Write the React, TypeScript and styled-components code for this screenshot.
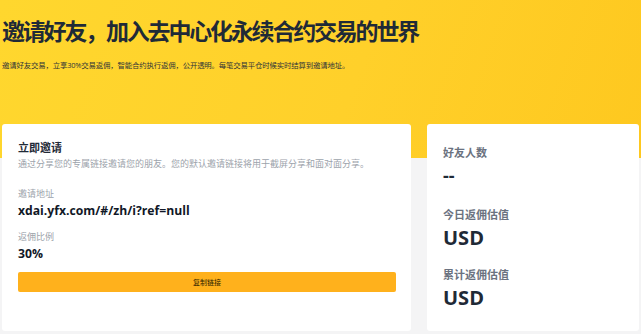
import React from 'react';
import styled, { createGlobalStyle } from 'styled-components';

const GlobalStyle = createGlobalStyle`
  html, body {
    margin: 0;
    padding: 0;
    background: #f4f4f5;
    font-family: "Open Sans", "Noto Sans CJK SC", sans-serif;
  }
`;

export default function App() {
  return (
    <>
      <GlobalStyle />
      <Page>
        <Banner>
          <Title>邀请好友，加入去中心化永续合约交易的世界</Title>
          <Subtitle>
            邀请好友交易，立享30%交易返佣，智能合约执行返佣，公开透明。每笔交易平仓时候实时结算到邀请地址。
          </Subtitle>
        </Banner>
        <CardRow>
          <InviteCard>
            <CardTitle>立即邀请</CardTitle>
            <CardDesc>
              通过分享您的专属链接邀请您的朋友。您的默认邀请链接将用于截屏分享和面对面分享。
            </CardDesc>
            <FieldLabel $gap={18}>邀请地址</FieldLabel>
            <FieldValue>xdai.yfx.com/#/zh/i?ref=null</FieldValue>
            <FieldLabel $gap={12}>返佣比例</FieldLabel>
            <FieldValue>30%</FieldValue>
            <CopyButton>复制链接</CopyButton>
          </InviteCard>
          <StatsCard>
            <StatLabel>好友人数</StatLabel>
            <StatDash>--</StatDash>
            <StatLabel>今日返佣估值</StatLabel>
            <StatValue>USD</StatValue>
            <StatLabel>累计返佣估值</StatLabel>
            <StatValue>USD</StatValue>
          </StatsCard>
        </CardRow>
      </Page>
    </>
  );
}

const Page = styled.main`
  width: 641px;
  min-height: 334px;
`;

const Banner = styled.header`
  height: 158px;
  box-sizing: border-box;
  padding: 15px 0 0 2px;
  background: linear-gradient(110deg, #ffd72e 0%, #ffd02a 55%, #fec81f 100%);
`;

const Title = styled.h1`
  margin: 0;
  font-size: 23px;
  line-height: 32px;
  letter-spacing: -2.2px;
  font-weight: 700;
  color: #1f2a37;
`;

const Subtitle = styled.p`
  margin: 13px 0 0;
  font-size: 7.4px;
  line-height: 10px;
  letter-spacing: -0.15px;
  color: #2f3338;
`;

const CardRow = styled.section`
  display: grid;
  grid-template-columns: 409px 212px;
  gap: 16px;
  padding: 0 2px;
  margin-top: -34px;
`;

const Card = styled.div`
  background: #ffffff;
  border-radius: 3px;
  height: 207px;
  box-sizing: border-box;
  display: flex;
  flex-direction: column;
`;

const InviteCard = styled(Card)`
  padding: 17px 15px 0 16px;
`;

const CardTitle = styled.h2`
  margin: 0;
  font-size: 11px;
  line-height: 14px;
  font-weight: 700;
  color: #1f2a37;
`;

const CardDesc = styled.p`
  margin: 3px 0 0;
  font-size: 9px;
  line-height: 12px;
  color: #9ca3ab;
  white-space: nowrap;
`;

const FieldLabel = styled.div<{ $gap?: number }>`
  margin-top: ${(p) => p.$gap ?? 17}px;
  font-size: 9px;
  line-height: 12px;
  color: #9ca3ab;
`;

const FieldValue = styled.div`
  margin-top: 3px;
  font-size: 12.2px;
  line-height: 16px;
  font-weight: 700;
  color: #111827;
`;

const CopyButton = styled.button`
  margin-top: 10px;
  height: 20px;
  width: 378px;
  border: none;
  border-radius: 2px;
  background: #ffb11c;
  color: #2e2200;
  font-family: inherit;
  font-size: 7px;
  cursor: pointer;
`;

const StatsCard = styled(Card)`
  padding: 21px 16px 0 16px;
`;

const StatLabel = styled.div`
  font-size: 11px;
  line-height: 16px;
  font-weight: 700;
  color: #6b7280;
`;

const StatDash = styled.div`
  margin: 4px 0 22px;
  font-size: 18px;
  line-height: 20px;
  font-weight: 700;
  color: #1f2a37;
`;

const StatValue = styled.div`
  margin: 3px 0 17px;
  font-size: 20px;
  line-height: 24px;
  font-weight: 700;
  color: #1f2a37;
`;
